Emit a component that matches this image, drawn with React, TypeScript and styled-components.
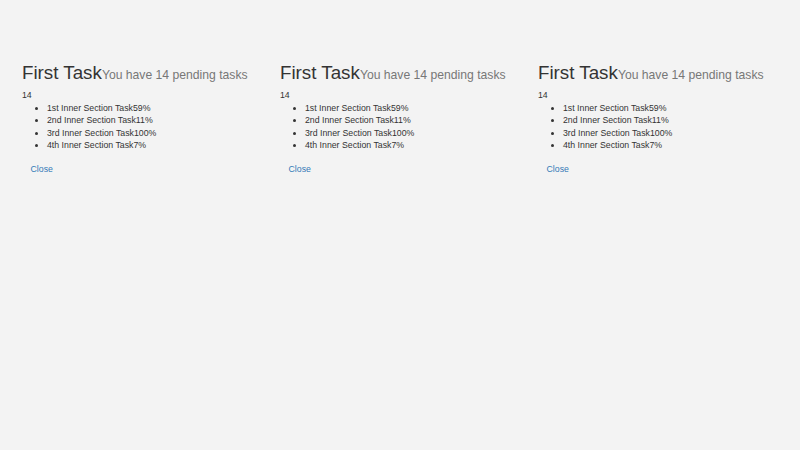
import styled, { createGlobalStyle } from "styled-components";

const GlobalStyle = createGlobalStyle`
  html, body {
    margin: 0;
    padding: 0;
    background: #f3f3f3;
  }
  body {
    font-family: "Liberation Sans", Arial, sans-serif;
    font-size: 8.75px;
    line-height: 1.42857;
    color: #333;
  }
`;

const Page = styled.div`
  min-height: 450px;
  padding: 50px 0 0 22px;
  box-sizing: border-box;
`;

const Columns = styled.div`
  display: grid;
  grid-template-columns: repeat(3, 258px);
`;

const Card = styled.section`
  display: flex;
  flex-direction: column;
  align-items: flex-start;
`;

const Title = styled.h2`
  margin: 12.5px 0 6.25px;
  font-size: 18.75px;
  font-weight: 500;
  line-height: 1.1;
  color: #333;
  white-space: nowrap;
`;

const Subtitle = styled.small`
  font-size: 65%;
  font-weight: 400;
  color: #777;
`;

const Count = styled.div``;

const TaskList = styled.ul`
  margin: 0 0 6.25px;
  padding-left: 25px;
`;

const CloseButton = styled.button`
  border: 0.625px solid transparent;
  background: transparent;
  padding: 3.75px 7.5px;
  font: inherit;
  line-height: 1.42857;
  color: #337ab7;
  cursor: pointer;
`;

interface Task {
  name: string;
  percent: number;
}

const tasks: Task[] = [
  { name: "1st Inner Section Task", percent: 59 },
  { name: "2nd Inner Section Task", percent: 11 },
  { name: "3rd Inner Section Task", percent: 100 },
  { name: "4th Inner Section Task", percent: 7 },
];

const TaskCard = () => (
  <Card>
    <Title>
      First Task<Subtitle>You have 14 pending tasks</Subtitle>
    </Title>
    <Count>14</Count>
    <TaskList>
      {tasks.map((t) => (
        <li key={t.name}>
          {t.name}
          {t.percent}%
        </li>
      ))}
    </TaskList>
    <CloseButton>Close</CloseButton>
  </Card>
);

const App = () => (
  <>
    <GlobalStyle />
    <Page>
      <Columns>
        <TaskCard />
        <TaskCard />
        <TaskCard />
      </Columns>
    </Page>
  </>
);

export default App;
